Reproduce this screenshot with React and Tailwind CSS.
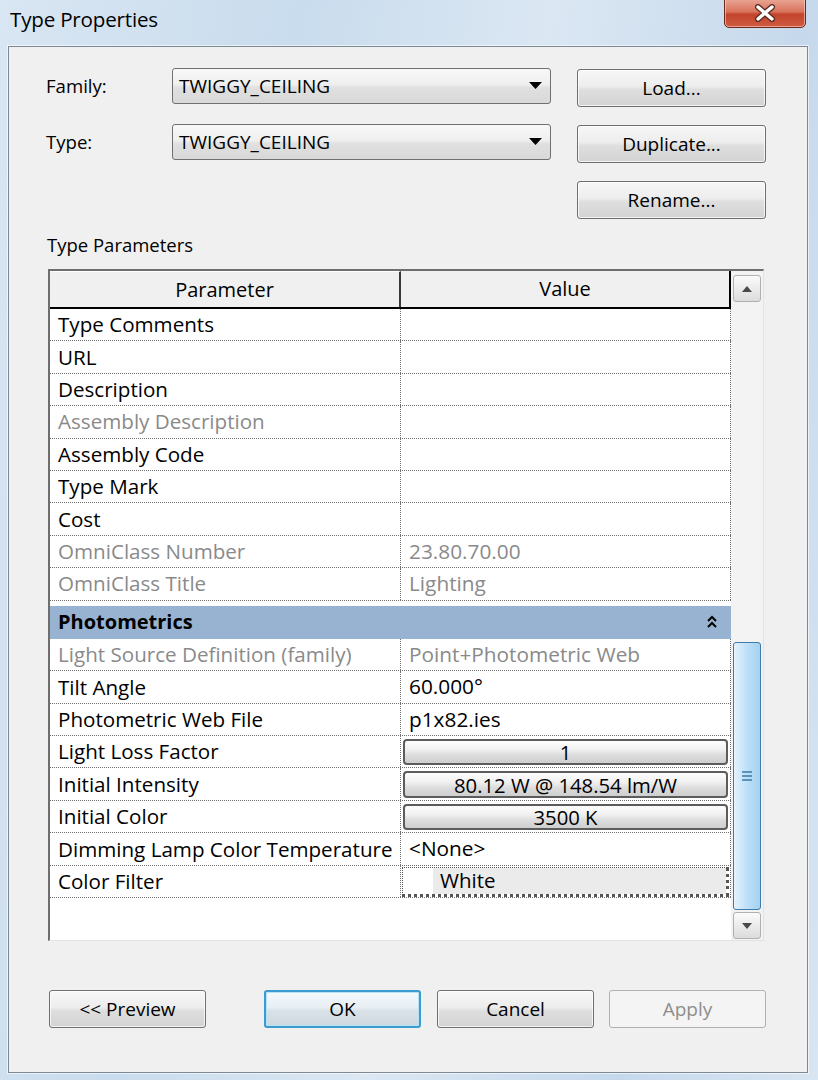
import React from "react";

const grad =
  "bg-[linear-gradient(to_bottom,#f7f7f7_0%,#ededed_45%,#dedede_55%,#d3d3d3_100%)] shadow-[inset_0_0_0_1px_rgba(255,255,255,0.7)]";
const btn = `flex items-center justify-center border border-[#707070] rounded-[3px] ${grad} text-[19px] text-black`;

const rows1 = [
  ["Type Comments", ""],
  ["URL", ""],
  ["Description", ""],
  ["Assembly Description", "", true],
  ["Assembly Code", ""],
  ["Type Mark", ""],
  ["Cost", ""],
  ["OmniClass Number", "23.80.70.00", true],
  ["OmniClass Title", "Lighting", true],
];

const rows2 = [
  ["Light Source Definition (family)", "Point+Photometric Web", true],
  ["Tilt Angle", "60.000°"],
  ["Photometric Web File", "p1x82.ies"],
  ["Light Loss Factor", "1", false, "button"],
  ["Initial Intensity", "80.12 W @ 148.54 lm/W", false, "button"],
  ["Initial Color", "3500 K", false, "button"],
  ["Dimming Lamp Color Temperature", "<None>"],
  ["Color Filter", "White", false, "color"],
];

function Row({ name, value, gray, kind }) {
  const tc = gray ? "text-[#8a8a8a]" : "text-black";
  return (
    <div className="flex h-[32.4px] border-b border-dotted border-[#6f6f6f]">
      <div className={`w-[351px] flex items-center pl-[8px] border-r border-dotted border-[#6f6f6f] text-[20.6px] whitespace-nowrap ${tc}`}>
        {name}
      </div>
      <div className="flex-1 flex items-stretch border-r border-dotted border-[#6f6f6f]">
        {kind === "button" ? (
          <div className="flex-1 mx-[2px] mt-[3px] mb-[2px] flex items-center justify-center rounded-[4px] border-2 border-[#5c5c5c] bg-[linear-gradient(to_bottom,#fdfdfd_0%,#f0f0f0_40%,#dcdcdc_65%,#cfcfcf_100%)] text-[20.3px] text-black leading-none">
            {value}
          </div>
        ) : kind === "color" ? (
          <div className="flex-1 mx-[1px] mt-[1px] flex border-t border-l border-b-[3px] border-r-[3px] border-dotted border-[#555]">
            <div className="w-[30px] bg-white" />
            <div className="flex-1 flex items-center pl-[7px] bg-[#ebebeb] text-[20.5px] text-black">
              {value}
            </div>
          </div>
        ) : (
          <div className={`flex items-center pl-[8px] text-[20.8px] whitespace-nowrap ${tc}`}>{value}</div>
        )}
      </div>
    </div>
  );
}

function Dropdown({ text }) {
  return (
    <div className="w-[379px] h-[36px] flex items-center justify-between pl-[6px] pr-[8px] border border-[#707070] rounded-[3px] bg-[linear-gradient(to_bottom,#f8f8f8_0%,#efefef_45%,#e0e0e0_55%,#d8d8d8_100%)] text-[19px] text-black">
      <span>{text}</span>
      <svg width="13" height="8" viewBox="0 0 13 8">
        <path d="M0 0 H13 L6.5 7 Z" fill="#000" />
      </svg>
    </div>
  );
}

export default function App() {
  return (
    <div className="w-[818px] h-[1080px] overflow-hidden relative font-['Open_Sans','Noto_Sans',sans-serif] bg-[linear-gradient(100deg,#d9e6f3_0%,#c9dced_30%,#dbe7f3_55%,#c6d9ec_80%,#d8e5f2_100%)]">
      {/* title bar */}
      <div className="h-[46px] flex items-start pl-[10px] pt-[4px]">
        <span className="text-[20.6px] text-black tracking-[-0.2px]">Type Properties</span>
      </div>
      <div className="absolute left-[724px] top-[-2px] w-[82px] h-[30px] rounded-b-[5px] border border-[#6b2a1e] bg-[linear-gradient(to_bottom,#e9a796_0%,#d9735d_45%,#c2432b_55%,#cf5c42_100%)] flex items-center justify-center shadow-[inset_0_0_0_1px_rgba(255,210,200,0.6)]">
        <svg width="22" height="18" viewBox="0 0 22 18">
          <path d="M4 3 L18 15 M18 3 L4 15" stroke="#5a2a22" strokeWidth="6" strokeLinecap="round" />
          <path d="M4 3 L18 15 M18 3 L4 15" stroke="#ffffff" strokeWidth="3.4" strokeLinecap="round" />
        </svg>
      </div>

      {/* panel */}
      <div className="ml-[8px] w-[800px] h-[1027px] border border-[#7c8894] bg-[#f0f0f0] shadow-[0_0_0_1px_rgba(255,255,255,0.6)]">
        <div className="pt-[21px] pl-[37px] flex flex-col gap-[18px]">
          <div className="flex items-start h-[38px]">
            <div className="w-[126px] h-[36px] flex items-center text-[18.6px] text-black">Family:</div>
            <Dropdown text="TWIGGY_CEILING" />
            <div className={`${btn} ml-[26px] mt-[1px] w-[189px] h-[38px]`}>Load...</div>
          </div>
          <div className="flex items-start h-[38px]">
            <div className="w-[126px] h-[36px] flex items-center text-[18.6px] text-black">Type:</div>
            <Dropdown text="TWIGGY_CEILING" />
            <div className={`${btn} ml-[26px] mt-[1px] w-[189px] h-[38px]`}>Duplicate...</div>
          </div>
          <div className="flex items-start h-[38px]">
            <div className="w-[505px]" />
            <div className={`${btn} ml-[26px] mt-[1px] w-[189px] h-[38px]`}>Rename...</div>
          </div>
        </div>

        <div className="pl-[38px] mt-[15px] text-[18.5px] text-black leading-[24px]">Type Parameters</div>

        {/* table */}
        <div className="ml-[39px] mt-[12px] w-[716px] h-[672px] flex border-t-2 border-l-2 border-[#6e6e6e] border-r border-b border-r-[#e2e2e2] border-b-[#e2e2e2]">
          <div className="w-[681px] bg-white flex flex-col">
            <div className="flex h-[38px] bg-[#f0f0f0] border-b-2 border-black">
              <div className="w-[351px] flex items-center justify-center border-r-2 border-[#3a3a3a] text-[20px] text-black border-t border-t-white">
                Parameter
              </div>
              <div className="flex-1 flex items-center justify-center border-r-2 border-black text-[20px] text-black">
                Value
              </div>
            </div>
            {rows1.map((r) => (
              <Row key={r[0]} name={r[0]} value={r[1]} gray={r[2]} kind={r[3]} />
            ))}
            <div className="h-[38.4px] pt-[5px] bg-white">
              <div className="h-full bg-[#98b3d1] flex items-center justify-between pl-[8px] pr-[13px]">
                <span className="text-[20px] font-bold text-black">Photometrics</span>
                <svg width="12" height="14" viewBox="0 0 12 14">
                  <path d="M2 6 L6 2 L10 6 M2 12 L6 8 L10 12" stroke="#000" strokeWidth="2" fill="none" />
                </svg>
              </div>
            </div>
            {rows2.map((r) => (
              <Row key={r[0]} name={r[0]} value={r[1]} gray={r[2]} kind={r[3]} />
            ))}
          </div>
          {/* scrollbar */}
          <div className="flex-1 bg-[#f3f3f3] flex flex-col items-center pt-[4px] pb-[1px]">
            <div className="w-[28px] h-[27px] rounded-[3px] border border-[#b0b0b0] bg-[linear-gradient(to_bottom,#fbfbfb,#dcdcdc)] flex items-center justify-center">
              <svg width="10" height="6" viewBox="0 0 10 6">
                <path d="M0 6 L5 0 L10 6 Z" fill="#4a4a4a" />
              </svg>
            </div>
            <div className="flex-1 w-full" />
            <div className="w-[28px] h-[268px] rounded-[3px] border border-[#3d7bab] bg-[linear-gradient(to_right,#e6f3fd_0%,#bde0f8_50%,#a5d1f1_100%)] flex items-center justify-center">
              <svg width="12" height="10" viewBox="0 0 12 10">
                <path d="M1 1 H11 M1 5 H11 M1 9 H11" stroke="#3f79a6" strokeWidth="1.4" />
              </svg>
            </div>
            <div className="mt-[2px] w-[28px] h-[27px] rounded-[3px] border border-[#b0b0b0] bg-[linear-gradient(to_bottom,#fbfbfb,#dcdcdc)] flex items-center justify-center">
              <svg width="10" height="6" viewBox="0 0 10 6">
                <path d="M0 0 L5 6 L10 0 Z" fill="#4a4a4a" />
              </svg>
            </div>
          </div>
        </div>

        {/* bottom buttons */}
        <div className="ml-[40px] mt-[49px] flex h-[38px]">
          <div className={`${btn} w-[157px] h-[38px]`}>&lt;&lt; Preview</div>
          <div className={`ml-[58px] w-[157px] h-[38px] flex items-center justify-center rounded-[3px] border-2 border-[#3c9bcf] bg-[linear-gradient(to_bottom,#f3f9fd_0%,#e8eff4_45%,#d9e2e8_55%,#ced8df_100%)] shadow-[inset_0_0_0_1px_#b6e2f7] text-[19px] text-black`}>OK</div>
          <div className={`${btn} ml-[16px] w-[157px] h-[38px]`}>Cancel</div>
          <div className="ml-[15px] w-[157px] h-[38px] flex items-center justify-center rounded-[3px] border border-[#adb2b5] bg-[#f4f4f4] text-[19px] text-[#8d8d8d]">
            Apply
          </div>
        </div>
      </div>
    </div>
  );
}
